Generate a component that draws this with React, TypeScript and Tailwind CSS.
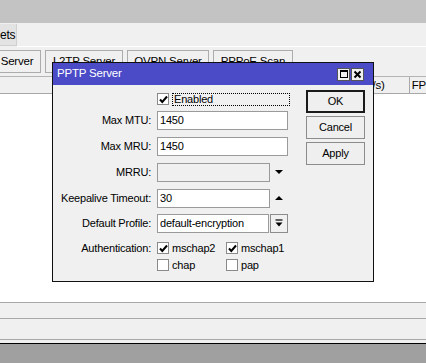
import React from "react"

function Check() {
  return (
    <svg width="9" height="9" viewBox="0 0 9 9" className="block">
      <path d="M1 4.5 L3.3 7 L8 1.5" fill="none" stroke="#000" strokeWidth="2" />
    </svg>
  )
}

function Box({ checked }: { checked?: boolean }) {
  return (
    <span className="flex h-[12px] w-[12px] shrink-0 items-center justify-center border border-[#8a8a8a] bg-white">
      {checked && <Check />}
    </span>
  )
}

function Field({ value, disabled, w = "w-[131px]" }: { value?: string; disabled?: boolean; w?: string }) {
  return (
    <div
      className={`flex h-[19px] ${w} items-center border border-[#9a9a9a] pl-[2px] ${disabled ? "bg-[#f0f0f0]" : "bg-white"}`}
    >
      {value}
    </div>
  )
}

function Btn({ label, primary }: { label: string; primary?: boolean }) {
  return (
    <div
      className={`flex h-[23px] w-[59px] items-center justify-center bg-[#efefef] ${
        primary ? "border-2 border-[#1a1a1a]" : "border border-[#8c8c8c]"
      }`}
    >
      {label}
    </div>
  )
}

function Row({ label, children, className = "" }: { label: string; children: React.ReactNode; className?: string }) {
  return (
    <div className={`flex items-center ${className}`}>
      <div className="w-[99px] pr-[1px] text-right">{label}</div>
      <div className="ml-[5px] flex items-center">{children}</div>
    </div>
  )
}

export default function App() {
  return (
    <div className="relative h-[363px] w-[426px] overflow-hidden bg-white text-[11px] tracking-[-0.2px] text-black font-['Liberation_Sans',Arial,sans-serif]">
      <div className="flex h-full flex-col">
        {/* window top */}
        <div className="h-[23px] bg-[#c3c3c3]" />
        <div className="flex h-[24px] bg-[#f0f0f0] pt-[1px]">
          <div className="flex h-[22px] w-[17px] items-center border-r border-b border-[#d0d0d0] bg-[#e3e3e3] text-[12px]">
            ets
          </div>
          <div className="flex-1 border-b border-white" />
        </div>
        {/* toolbar */}
        <div className="flex h-[30px] gap-[4px] border-b border-[#b4b4b4] bg-[#f0f0f0] pt-[3px] text-[11.5px]">
          <div className="-ml-[7px] flex h-[23px] w-[48px] items-center justify-center border border-[#acacac]">Server</div>
          <div className="flex h-[23px] w-[78px] items-center justify-center border border-[#acacac]">L2TP Server</div>
          <div className="flex h-[23px] w-[82px] items-center justify-center border border-[#acacac]">OVPN Server</div>
          <div className="flex h-[23px] w-[80px] items-center justify-center border border-[#acacac]">PPPoE Scan</div>
        </div>
        {/* table header */}
        <div className="flex h-[17px] border-b border-[#a8a8a8] bg-[#f0f0f0] text-[11.5px]">
          <div className="w-[412px] border-r border-[#a8a8a8] pr-[24px] text-right leading-[16px]">Tx Rate (b/s)</div>
          <div className="flex-1 pl-[2px] leading-[16px]">FP</div>
        </div>
        <div className="flex-1 bg-white" />
        {/* bottom bars */}
        <div className="h-[16px] border-t border-[#a8a8a8] bg-[#f0f0f0]" />
        <div className="h-[21px] border-t border-[#a8a8a8] bg-[#f0f0f0]" />
        <div className="h-[4px] border-t border-[#a8a8a8] bg-[#f0f0f0]" />
        <div className="flex-none h-[20px] border-t border-black bg-[#a0a0a0]" />
      </div>

      {/* dialog */}
      <div className="absolute left-[52px] top-[62px] flex h-[220px] w-[322px] flex-col border border-[#111] bg-[#f0f0f0]">
        <div className="flex h-[22px] items-center bg-[#4b4bc8] pl-[4px] pr-[9px] text-white">
          <span className="text-[11.5px]">PPTP Server</span>
          <div className="ml-auto flex gap-[1px]">
            <div className="flex h-[13px] w-[13px] items-center justify-center border border-[#555] bg-[#f0f0f0]">
              <div className="h-[8px] w-[8px] border border-black border-t-2" />
            </div>
            <div className="flex h-[13px] w-[13px] items-center justify-center border border-[#555] bg-[#f0f0f0]">
              <svg width="9" height="9" viewBox="0 0 9 9">
                <path d="M1.5 1.5 L7.5 7.5 M7.5 1.5 L1.5 7.5" stroke="#000" strokeWidth="2" />
              </svg>
            </div>
          </div>
        </div>
        <div className="flex flex-1">
          <div className="flex flex-col pt-[7px]">
            <Row label="" className="h-[14px]">
              <Box checked />
              <span className="ml-[3px] flex h-[13px] w-[118px] items-center border border-dotted border-black pl-[1px]">Enabled</span>
            </Row>
            <Row label="Max MTU:" className="mt-[5px]">
              <Field value="1450" />
            </Row>
            <Row label="Max MRU:" className="mt-[7px]">
              <Field value="1450" />
            </Row>
            <Row label="MRRU:" className="mt-[7px]">
              <Field disabled w="w-[113px]" />
              <svg width="18" height="19" viewBox="0 0 18 19">
                <path d="M5 7 H13 L9 11 Z" fill="#000" />
              </svg>
            </Row>
            <Row label="Keepalive Timeout:" className="mt-[7px]">
              <Field value="30" w="w-[113px]" />
              <svg width="18" height="19" viewBox="0 0 18 19">
                <path d="M5 11 H13 L9 7 Z" fill="#000" />
              </svg>
            </Row>
            <Row label="Default Profile:" className="mt-[6px]">
              <Field value="default-encryption" w="w-[112px]" />
              <div className="ml-[1px] flex h-[19px] w-[18px] items-center justify-center border border-[#8c8c8c] bg-[#f0f0f0]">
                <svg width="8" height="9" viewBox="0 0 8 9">
                  <path d="M0.5 1 H7.5" stroke="#000" strokeWidth="1.2" />
                  <path d="M0.5 3.5 H7.5 L4 7.5 Z" fill="#000" />
                </svg>
              </div>
            </Row>
            <Row label="Authentication:" className="mt-[8px] h-[14px]">
              <div className="flex w-[69px] items-center">
                <Box checked />
                <span className="ml-[3px]">mschap2</span>
              </div>
              <div className="flex items-center">
                <Box checked />
                <span className="ml-[3px]">mschap1</span>
              </div>
            </Row>
            <Row label="" className="mt-[3px] h-[14px]">
              <div className="flex w-[69px] items-center">
                <Box />
                <span className="ml-[3px]">chap</span>
              </div>
              <div className="flex items-center">
                <Box />
                <span className="ml-[3px]">pap</span>
              </div>
            </Row>
          </div>
          <div className="ml-[16px] flex flex-col gap-[3px] pt-[5px]">
            <Btn label="OK" primary />
            <Btn label="Cancel" />
            <Btn label="Apply" />
          </div>
        </div>
      </div>
    </div>
  )
}
